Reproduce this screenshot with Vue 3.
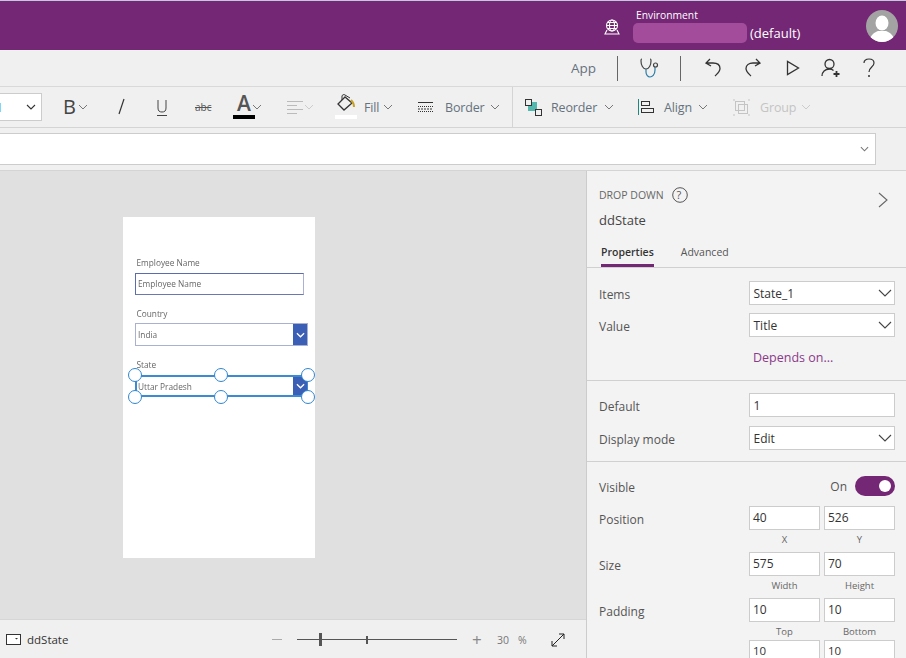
<template>
  <div class="page">
    <header class="topbar">
      <div class="env">
        <svg class="globe" viewBox="0 0 18 18" width="18" height="18" fill="none" stroke="#fff" stroke-width="1.100">
          <circle cx="9" cy="7.500" r="5.500" />
          <ellipse cx="9" cy="7.500" rx="2.500" ry="5.500" />
          <path d="M3.500 7.500h11M4.500 4.500h9M4.500 10.500h9M4 12l-2 4h14l-2-4" />
        </svg>
        <div class="env-text">
          <div class="env-label">Environment</div>
          <div class="env-name"><span class="env-pill"></span><span>(default)</span></div>
        </div>
      </div>
      <svg class="avatar" viewBox="0 0 32 32" width="32" height="32">
        <circle cx="16" cy="16" r="16" fill="#a3a3a3" />
        <clipPath id="av"><circle cx="16" cy="16" r="16" /></clipPath>
        <g clip-path="url(#av)" fill="#fff">
          <ellipse cx="16" cy="13" rx="6.500" ry="7.500" />
          <path d="M3 32c1-7 6-10 9-11h8c3 1 8 4 9 11z" />
        </g>
      </svg>
    </header>

    <div class="actions">
      <span class="app-label">App</span>
      <span class="vline first"></span>
      <svg class="a-steth" viewBox="0 0 20 20" width="20" height="20" fill="none" stroke-width="1.200">
        <path d="M2 1c-1 0-1 1-1 2 0 4 2 8 5 8s5-4 5-8c0-1 0-2-1-2" stroke="#444" />
        <path d="M6 11v3c0 3 2 5 4 5s5-2 5-7V9" stroke="#2b7ea8" />
        <circle cx="15.500" cy="7" r="2" stroke="#444" />
      </svg>
      <span class="vline second"></span>
      <svg class="a-undo" viewBox="0 0 18 20" width="18" height="20" fill="none" stroke="#333" stroke-width="1.300">
        <path d="M6 1 2 5l5 3M2 5h7c4 0 7 2 7 5.500 0 3-2 4.500-5 7.500" />
      </svg>
      <svg class="a-redo" viewBox="0 0 18 20" width="18" height="20" fill="none" stroke="#333" stroke-width="1.300">
        <path d="m12 1 4 4-5 3M16 5H9c-4 0-7 2-7 5.500 0 3 2 4.500 5 7.500" />
      </svg>
      <svg class="a-play" viewBox="0 0 14 16" width="14" height="16" fill="none" stroke="#333" stroke-width="1.300">
        <path d="M1.500 1.500v13l11-6.500z" />
      </svg>
      <svg class="a-user" viewBox="0 0 20 20" width="20" height="20" fill="none" stroke="#333" stroke-width="1.300">
        <circle cx="8.500" cy="6" r="4.500" />
        <path d="M1 18c0-4 3-7 7.500-7 1.500 0 3 .5 4 1.500" />
        <path d="M15.500 13v6M12.500 16h6" stroke-width="1.800" />
      </svg>
      <svg class="a-help" viewBox="0 0 12 20" width="12" height="20" fill="none" stroke="#333" stroke-width="1.200">
        <path d="M1 5c0-2.500 2-4 5-4s5 1.500 5 4c0 4-5 4-5 9" />
        <path d="M6 17v2" stroke-width="1.500" />
      </svg>
    </div>

    <div class="toolbar">
      <div class="font-box">
        <span class="font-accent"></span>
        <svg class="chev-svg" viewBox="0 0 10 6" width="10" height="6"><path d="m1 1 4 4 4-4" fill="none" stroke="#333" stroke-width="1.100" /></svg>
      </div>
      <span class="t-bold">B</span>
      <svg class="chev-svg t-b-ch" viewBox="0 0 10 6" width="10" height="6"><path d="m1 1 4 4 4-4" fill="none" stroke="#777" /></svg>
      <svg class="t-italic" viewBox="0 0 8 18" width="8" height="18"><path d="M7 1 2 16" stroke="#333" stroke-width="1.200" /></svg>
      <span class="t-under">
        <svg viewBox="0 0 12 17" width="12" height="17" fill="none" stroke="#444"><path d="M2 1v8c0 3 1.500 4 4 4s4-1 4-4V1M1 16.500h10" /></svg>
      </span>
      <span class="t-strike">abc</span>
      <div class="t-color">
        <span class="t-a">A</span>
        <span class="t-a-bar"></span>
      </div>
      <svg class="chev-svg t-a-ch" viewBox="0 0 10 6" width="10" height="6"><path d="m1 1 4 4 4-4" fill="none" stroke="#777" /></svg>
      <svg class="t-align" viewBox="0 0 16 13" width="16" height="13" stroke="#bbb"><path d="M0 .5h16M0 4.500h10M0 8.500h16M0 12.500h10" /></svg>
      <svg class="chev-svg t-al-ch" viewBox="0 0 10 6" width="10" height="6"><path d="m1 1 4 4 4-4" fill="none" stroke="#ccc" /></svg>
      <div class="t-fill">
        <svg viewBox="0 0 20 18" width="20" height="18" fill="none">
          <path d="M9 3 2 10l6 6 8-7z" stroke="#333" stroke-width="1.300" />
          <path d="M6 6V2c0-1 2-2 3-1l5 3" stroke="#333" />
          <path d="M15 6c2 2 3 4 3 7" stroke="#c8a227" stroke-width="2" />
        </svg>
        <span class="t-fill-bar"></span>
      </div>
      <span class="t-txt t-fill-txt">Fill</span>
      <svg class="chev-svg t-ch-gap" viewBox="0 0 10 6" width="10" height="6"><path d="m1 1 4 4 4-4" fill="none" stroke="#777" /></svg>
      <svg class="t-border" viewBox="0 0 15 10" width="15" height="10" stroke="#333"><path d="M0 .5h15" /><path d="M0 4.500h15M0 9.500h15" stroke-dasharray="1 1" /><path d="M0 7h15" stroke-dasharray="2 1" /></svg>
      <span class="t-txt t-border-txt">Border</span>
      <svg class="chev-svg t-ch-gap" viewBox="0 0 10 6" width="10" height="6"><path d="m1 1 4 4 4-4" fill="none" stroke="#777" /></svg>
      <span class="t-div"></span>
      <svg class="t-reorder" viewBox="0 0 17 17" width="17" height="17">
        <rect x="3" y="3" width="9" height="9" fill="#55b8ae" />
        <rect x=".5" y=".5" width="6" height="6" fill="#f0f0f0" stroke="#333" />
        <rect x="10.500" y="10.500" width="6" height="6" fill="#f0f0f0" stroke="#333" />
      </svg>
      <span class="t-txt t-reorder-txt">Reorder</span>
      <svg class="chev-svg t-ch-gap" viewBox="0 0 10 6" width="10" height="6"><path d="m1 1 4 4 4-4" fill="none" stroke="#777" /></svg>
      <svg class="t-alignic" viewBox="0 0 17 16" width="17" height="16" fill="none">
        <path d="M.5 0v16" stroke="#1a8a80" />
        <rect x="3.500" y="2.500" width="8" height="4" stroke="#333" />
        <rect x="3.500" y="9.500" width="12" height="4" stroke="#333" />
      </svg>
      <span class="t-txt t-align-txt">Align</span>
      <svg class="chev-svg t-ch-gap" viewBox="0 0 10 6" width="10" height="6"><path d="m1 1 4 4 4-4" fill="none" stroke="#777" /></svg>
      <svg class="t-group" viewBox="0 0 17 17" width="17" height="17" fill="none" stroke="#c4c4c4">
        <rect x="2.500" y="2.500" width="9" height="9" />
        <rect x="5.500" y="5.500" width="9" height="9" />
        <path d="M0 1h2M15 1h2M0 16h2M15 16h2" />
      </svg>
      <span class="t-txt t-group-txt">Group</span>
      <svg class="chev-svg t-ch-gap" viewBox="0 0 10 6" width="10" height="6"><path d="m1 1 4 4 4-4" fill="none" stroke="#ccc" /></svg>
    </div>

    <div class="formula">
      <div class="formula-box">
        <svg viewBox="0 0 10 6" width="9" height="6"><path d="m1 1 4 4 4-4" fill="none" stroke="#777" stroke-width="1.200" /></svg>
      </div>
    </div>

    <div class="main">
      <div class="left">
        <div class="canvas">
          <div class="phone">
            <div class="f-label">Employee Name</div>
            <div class="f-input">Employee Name</div>
            <div class="f-label gap">Country</div>
            <div class="f-dd">
              <span>India</span>
              <span class="f-dd-btn"><svg viewBox="0 0 10 6" width="9" height="6"><path d="m1 1 4 4 4-4" fill="none" stroke="#fff" stroke-width="1.400" /></svg></span>
            </div>
            <div class="f-label gap2">State</div>
            <div class="f-dd selected">
              <span>Uttar Pradesh</span>
              <span class="f-dd-btn"><svg viewBox="0 0 10 6" width="9" height="6"><path d="m1 1 4 4 4-4" fill="none" stroke="#fff" stroke-width="1.400" /></svg></span>
              <i v-for="h in handles" :key="h" class="handle" :class="h"></i>
            </div>
          </div>
        </div>
        <div class="status">
          <svg class="st-ic" viewBox="0 0 15 11" width="15" height="11"><rect x=".5" y=".5" width="14" height="10" fill="#fff" stroke="#333" /><path d="M9 4h3l-1.500 1.500z" fill="#333" /></svg>
          <span class="st-name">ddState</span>
          <span class="st-minus"></span>
          <div class="slider">
            <span class="sl-thumb"></span>
            <span class="sl-tick"></span>
          </div>
          <span class="st-plus">+</span>
          <span class="st-num">30</span>
          <span class="st-pct">%</span>
          <svg class="st-exp" viewBox="0 0 14 14" width="14" height="14" fill="none" stroke="#222"><path d="M1 13 13 1M8 1h5v5M1 8v5h5" /></svg>
        </div>
      </div>

      <aside class="panel">
        <div class="p-head">
          <div class="p-title-row">
            <span class="p-type">DROP DOWN</span>
            <svg class="p-q" viewBox="0 0 16 16" width="16" height="16" fill="none" stroke="#555"><circle cx="8" cy="8" r="7.300" /></svg>
            <span class="p-q-mark">?</span>
            <svg class="p-chev" viewBox="0 0 10 16" width="10" height="16" fill="none" stroke="#666" stroke-width="1.100"><path d="m1 1 8 7-8 7" /></svg>
          </div>
          <div class="p-name">ddState</div>
          <div class="tabs">
            <span class="tab active">Properties</span>
            <span class="tab">Advanced</span>
          </div>
        </div>

        <section class="sec sec1">
          <div class="row">
            <label>Items</label>
            <div class="box wide">State_1<svg class="box-ch" viewBox="0 0 14 8" width="14" height="8"><path d="m1 1 6 6 6-6" fill="none" stroke="#444" stroke-width="1.100" /></svg></div>
          </div>
          <div class="row">
            <label>Value</label>
            <div class="box wide">Title<svg class="box-ch" viewBox="0 0 14 8" width="14" height="8"><path d="m1 1 6 6 6-6" fill="none" stroke="#444" stroke-width="1.100" /></svg></div>
          </div>
          <div class="depends">Depends on...</div>
        </section>

        <section class="sec sec2">
          <div class="row">
            <label>Default</label>
            <div class="box wide">1</div>
          </div>
          <div class="row">
            <label>Display mode</label>
            <div class="box wide">Edit<svg class="box-ch" viewBox="0 0 14 8" width="14" height="8"><path d="m1 1 6 6 6-6" fill="none" stroke="#444" stroke-width="1.100" /></svg></div>
          </div>
        </section>

        <section class="sec3">
          <div class="row vis">
            <label>Visible</label>
            <div class="toggle-wrap"><span>On</span><span class="toggle"><i></i></span></div>
          </div>
          <div v-for="p in pairs" :key="p.label" class="pair">
            <label>{{ p.label }}</label>
            <div class="pair-col">
              <div class="box half">{{ p.a }}</div>
              <div class="cap">{{ p.ca }}</div>
            </div>
            <div class="pair-col">
              <div class="box half">{{ p.b }}</div>
              <div class="cap">{{ p.cb }}</div>
            </div>
          </div>
          <div class="pair last">
            <label></label>
            <div class="pair-col"><div class="box half">10</div></div>
            <div class="pair-col"><div class="box half">10</div></div>
          </div>
        </section>
      </aside>
    </div>
  </div>
</template>

<script setup>
const handles = ['tl', 'tm', 'tr', 'bl', 'bm', 'br']
const pairs = [
  { label: 'Position', a: '40', b: '526', ca: 'X', cb: 'Y' },
  { label: 'Size', a: '575', b: '70', ca: 'Width', cb: 'Height' },
  { label: 'Padding', a: '10', b: '10', ca: 'Top', cb: 'Bottom' },
]
</script>

<style>
html, body { margin: 0; padding: 0; background: #f0f0f0; overflow: hidden; }
</style>

<style scoped>
.page {
  width: 906px;
  height: 658px;
  overflow: hidden;
  display: flex;
  flex-direction: column;
  font-family: "Open Sans", "Noto Sans", sans-serif;
  color: #444;
  background: #f0f0f0;
}
.topbar {
  height: 49px;
  border-top: 1px solid #c3c9dc;
  flex: none;
  background: #742774;
  color: #fff;
  display: flex;
  align-items: flex-start;
}
.env { display: flex; margin-left: 603px; width: 263px; }
.globe { margin-top: 17px; }
.env-text { margin-left: 15px; margin-top: 8px; }
.env-label { font-size: 10.300px; line-height: 13px; }
.env-name { display: flex; align-items: center; font-size: 13px; line-height: 20px; margin-left: -3px; margin-top: 1px; }
.env-pill { width: 114px; height: 20px; background: #a34c9c; border-radius: 5px; margin-right: 3px; }
.avatar { margin-top: 9px; }

.actions {
  height: 36px;
  flex: none;
  display: flex;
  align-items: center;
  border-bottom: 1px solid #d9d9d9;
}
.app-label { margin-left: 571px; font-size: 13.500px; color: #66727e; width: 46px; }
.vline { width: 1px; height: 25px; background: #666; }
.a-steth { margin-left: 22px; }
.vline.second { margin-left: 20px; }
.a-undo { margin-left: 23px; }
.a-redo { margin-left: 22px; }
.a-play { margin-left: 24px; }
.a-user { margin-left: 21px; }
.a-help { margin-left: 22px; }

.toolbar {
  height: 40px;
  flex: none;
  display: flex;
  align-items: center;
  border-bottom: 1px solid #d4d4d4;
  font-size: 13px;
}
.chev-svg { flex: none; }
.font-box {
  width: 42px;
  height: 28px;
  background: #fff;
  border: 1px solid #ccc;
  border-left: 0;
  display: flex;
  align-items: center;
  justify-content: space-between;
  padding-right: 5px;
  box-sizing: border-box;
}
.font-accent { width: 1px; height: 9px; background: #7fd6f5; }
.t-bold { margin-left: 21px; font-size: 20px; width: 13px; color: #444; line-height: 20px; }
.t-b-ch { margin-left: 2px; }
.t-italic { margin-left: 29px; }
.t-under { margin-left: 31px; display: flex; }
.t-strike { margin-left: 27px; font-size: 10px; text-decoration: line-through; color: #555; width: 20px; }
.t-color { margin-left: 18px; width: 22px; display: flex; flex-direction: column; align-items: center; align-self: flex-start; margin-top: 5px; }
.t-a { font-size: 21px; font-weight: 600; line-height: 23px; color: #555; }
.t-a-bar { width: 22px; height: 4px; background: #000; }
.t-a-ch { margin-left: -3px; }
.t-align { margin-left: 25px; }
.t-al-ch { margin-left: 1px; }
.t-fill { margin-left: 21px; width: 22px; display: flex; flex-direction: column; align-items: center; align-self: flex-start; margin-top: 7px; }
.t-fill-bar { width: 22px; height: 4px; background: #fff; margin-top: 3px; }
.t-txt { color: #66727e; font-size: 12.500px; letter-spacing: -0.15px; line-height: 18px; padding-top: 1px; }
.t-fill-txt { margin-left: 7px; width: 14px; }
.t-ch-gap { margin-left: 5px; }
.t-border { margin-left: 25px; }
.t-border-txt { margin-left: 12px; width: 40px; }
.t-div { width: 1px; height: 40px; background: #d4d4d4; margin-left: 12px; }
.t-reorder { margin-left: 12px; }
.t-reorder-txt { margin-left: 9px; width: 48px; }
.t-alignic { margin-left: 24px; }
.t-align-txt { margin-left: 9px; width: 29px; }
.t-group { margin-left: 25px; }
.t-group-txt { margin-left: 10px; width: 36px; color: #c4c4c4; }

.formula { height: 43px; flex: none; border-bottom: 1px solid #d4d4d4; padding-top: 5px; box-sizing: border-box; }
.formula-box {
  width: 876px;
  height: 32px;
  box-sizing: border-box;
  background: #fff;
  border: 1px solid #ccc;
  border-left: 0;
  display: flex;
  align-items: center;
  justify-content: flex-end;
  padding-right: 6px;
}

.main { flex: 1; display: flex; min-height: 0; }
.left { width: 586px; display: flex; flex-direction: column; flex: none; }
.canvas { height: 449px; flex: none; background: #e0e0e0; border-bottom: 1px solid #d6d6d6; padding: 46px 0 0 123px; box-sizing: border-box; }
.phone { width: 192px; height: 341px; background: #fff; padding: 41px 0 0 12px; box-sizing: border-box; font-size: 8.300px; color: #666; filter: blur(0.25px); }
.f-label { font-size: 8.300px; line-height: 10px; margin-left: 1.500px; }
.gap { margin-top: 14px; }
.gap2 { margin-top: 14px; }
.f-input {
  margin-top: 5px;
  width: 169px;
  height: 22px;
  box-sizing: border-box;
  border: 1px solid #5a6cae;
  border-right-color: #aab2d4;
  border-bottom-color: #6a78b2;
  padding-left: 2px;
  line-height: 20px;
}
.f-dd {
  margin-top: 4px;
  width: 173px;
  height: 23px;
  box-sizing: border-box;
  border: 1px solid #a9b1d2;
  padding-left: 2px;
  display: flex;
  align-items: center;
  justify-content: space-between;
  position: relative;
}
.f-dd-btn { width: 14px; align-self: stretch; background: #3b5fb5; display: flex; align-items: center; justify-content: center; }
.selected { border: 2px solid #3a8ad4; height: 22px; margin-top: 5px; padding-left: 1px; }
.selected .f-dd-btn { margin-right: -1px; }
.handle {
  position: absolute;
  width: 14px;
  height: 14px;
  border: 1.700px solid #2f86d0;
  background: #fff;
  border-radius: 50%;
  box-sizing: border-box;
}
.tl { left: -9px; top: -9px; }
.tm { left: 77px; top: -9px; }
.tr { left: 164px; top: -9px; }
.bl { left: -9px; bottom: -9px; }
.bm { left: 77px; bottom: -9px; }
.br { left: 164px; bottom: -9px; }

.status { flex: 1; display: flex; align-items: center; font-size: 11.500px; color: #333; padding-top: 1px; box-sizing: border-box; }
.st-ic { margin-left: 6px; }
.st-name { margin-left: 6px; width: 50px; }
.st-minus { width: 10px; height: 1px; background: #aaa; margin-left: 195px; }
.slider { margin-left: 15px; width: 160px; height: 1.500px; background: #555; position: relative; }
.sl-thumb { position: absolute; left: 22px; top: -6px; width: 3px; height: 13px; background: #555; }
.sl-tick { position: absolute; left: 69px; top: -3px; width: 2px; height: 8px; background: #555; }
.st-plus { margin-left: 15px; font-size: 17px; color: #888; width: 10px; line-height: 16px; }
.st-num { margin-left: 15px; color: #777; font-size: 10.500px; width: 21px; }
.st-pct { color: #777; font-size: 10.500px; width: 33px; }

.panel { width: 320px; flex: none; background: #f3f3f3; border-left: 1px solid #ccc; box-sizing: border-box; font-size: 12px; color: #555; overflow: hidden; }
.p-head { height: 97px; border-bottom: 1px solid #d0d0d0; box-sizing: border-box; padding: 14px 0 0 12px; }
.p-title-row { display: flex; align-items: center; height: 20px; position: relative; }
.p-type { font-size: 10.500px; color: #666; width: 73px; }
.p-q { flex: none; }
.p-q-mark { position: absolute; left: 77.500px; top: 1px; font-size: 11px; color: #555; line-height: 18px; }
.p-chev { margin-left: 190px; margin-top: 9px; }
.p-name { font-size: 13px; color: #444; line-height: 18px; margin-top: 6px; }
.tabs { display: flex; margin-top: 15px; margin-left: 2px; }
.tab { font-size: 10.500px; color: #555; height: 23px; margin-right: 27px; line-height: 16px; box-sizing: border-box; }
.tab.active { font-weight: 600; color: #333; border-bottom: 3px solid #742774; }

.sec { border-bottom: 1px solid #d0d0d0; padding: 13px 11px 0 12px; box-sizing: border-box; }
.sec1 { height: 113px; }
.sec2 { height: 81px; padding-top: 12px; }
.row { display: flex; align-items: center; justify-content: space-between; height: 24px; margin-bottom: 8px; font-size: 12px; }
.row label { padding-top: 2px; }
.sec2 .row { margin-bottom: 9px; }
.box { height: 24px; box-sizing: border-box; background: #fff; border: 1px solid #ccc; font-size: 12px; color: #333; padding-left: 3px; line-height: 22px; position: relative; }
.wide { width: 146px; padding-left: 3.500px; line-height: 23px; }
.half { width: 71px; }
.box-ch { position: absolute; right: 2px; top: 7px; }
.depends { margin-left: 154px; color: #8a3a8a; font-size: 12.500px; margin-top: 12px; line-height: 18px; }

.sec3 { padding: 14px 11px 0 12px; }
.vis { height: 20px; margin-bottom: 10px; }
.toggle-wrap { display: flex; align-items: center; gap: 8px; }
.toggle { width: 40px; height: 20px; background: #742774; border-radius: 10px; position: relative; display: block; }
.toggle i { position: absolute; right: 4px; top: 4px; width: 12px; height: 12px; background: #fff; border-radius: 50%; }
.pair { display: flex; height: 46px; font-size: 12px; }
.pair label { width: 150px; line-height: 28px; flex: none; }
.pair-col { width: 71px; margin-right: 4px; }
.pair-col:last-child { margin-right: 0; }
.cap { font-size: 9.500px; color: #666; text-align: center; line-height: 20px; }
.last { margin-top: -4px; height: 18px; }
.last .box { height: 18px; border-bottom: 0; font-size: 11.500px; line-height: 14px; padding-top: 3px; }
</style>
